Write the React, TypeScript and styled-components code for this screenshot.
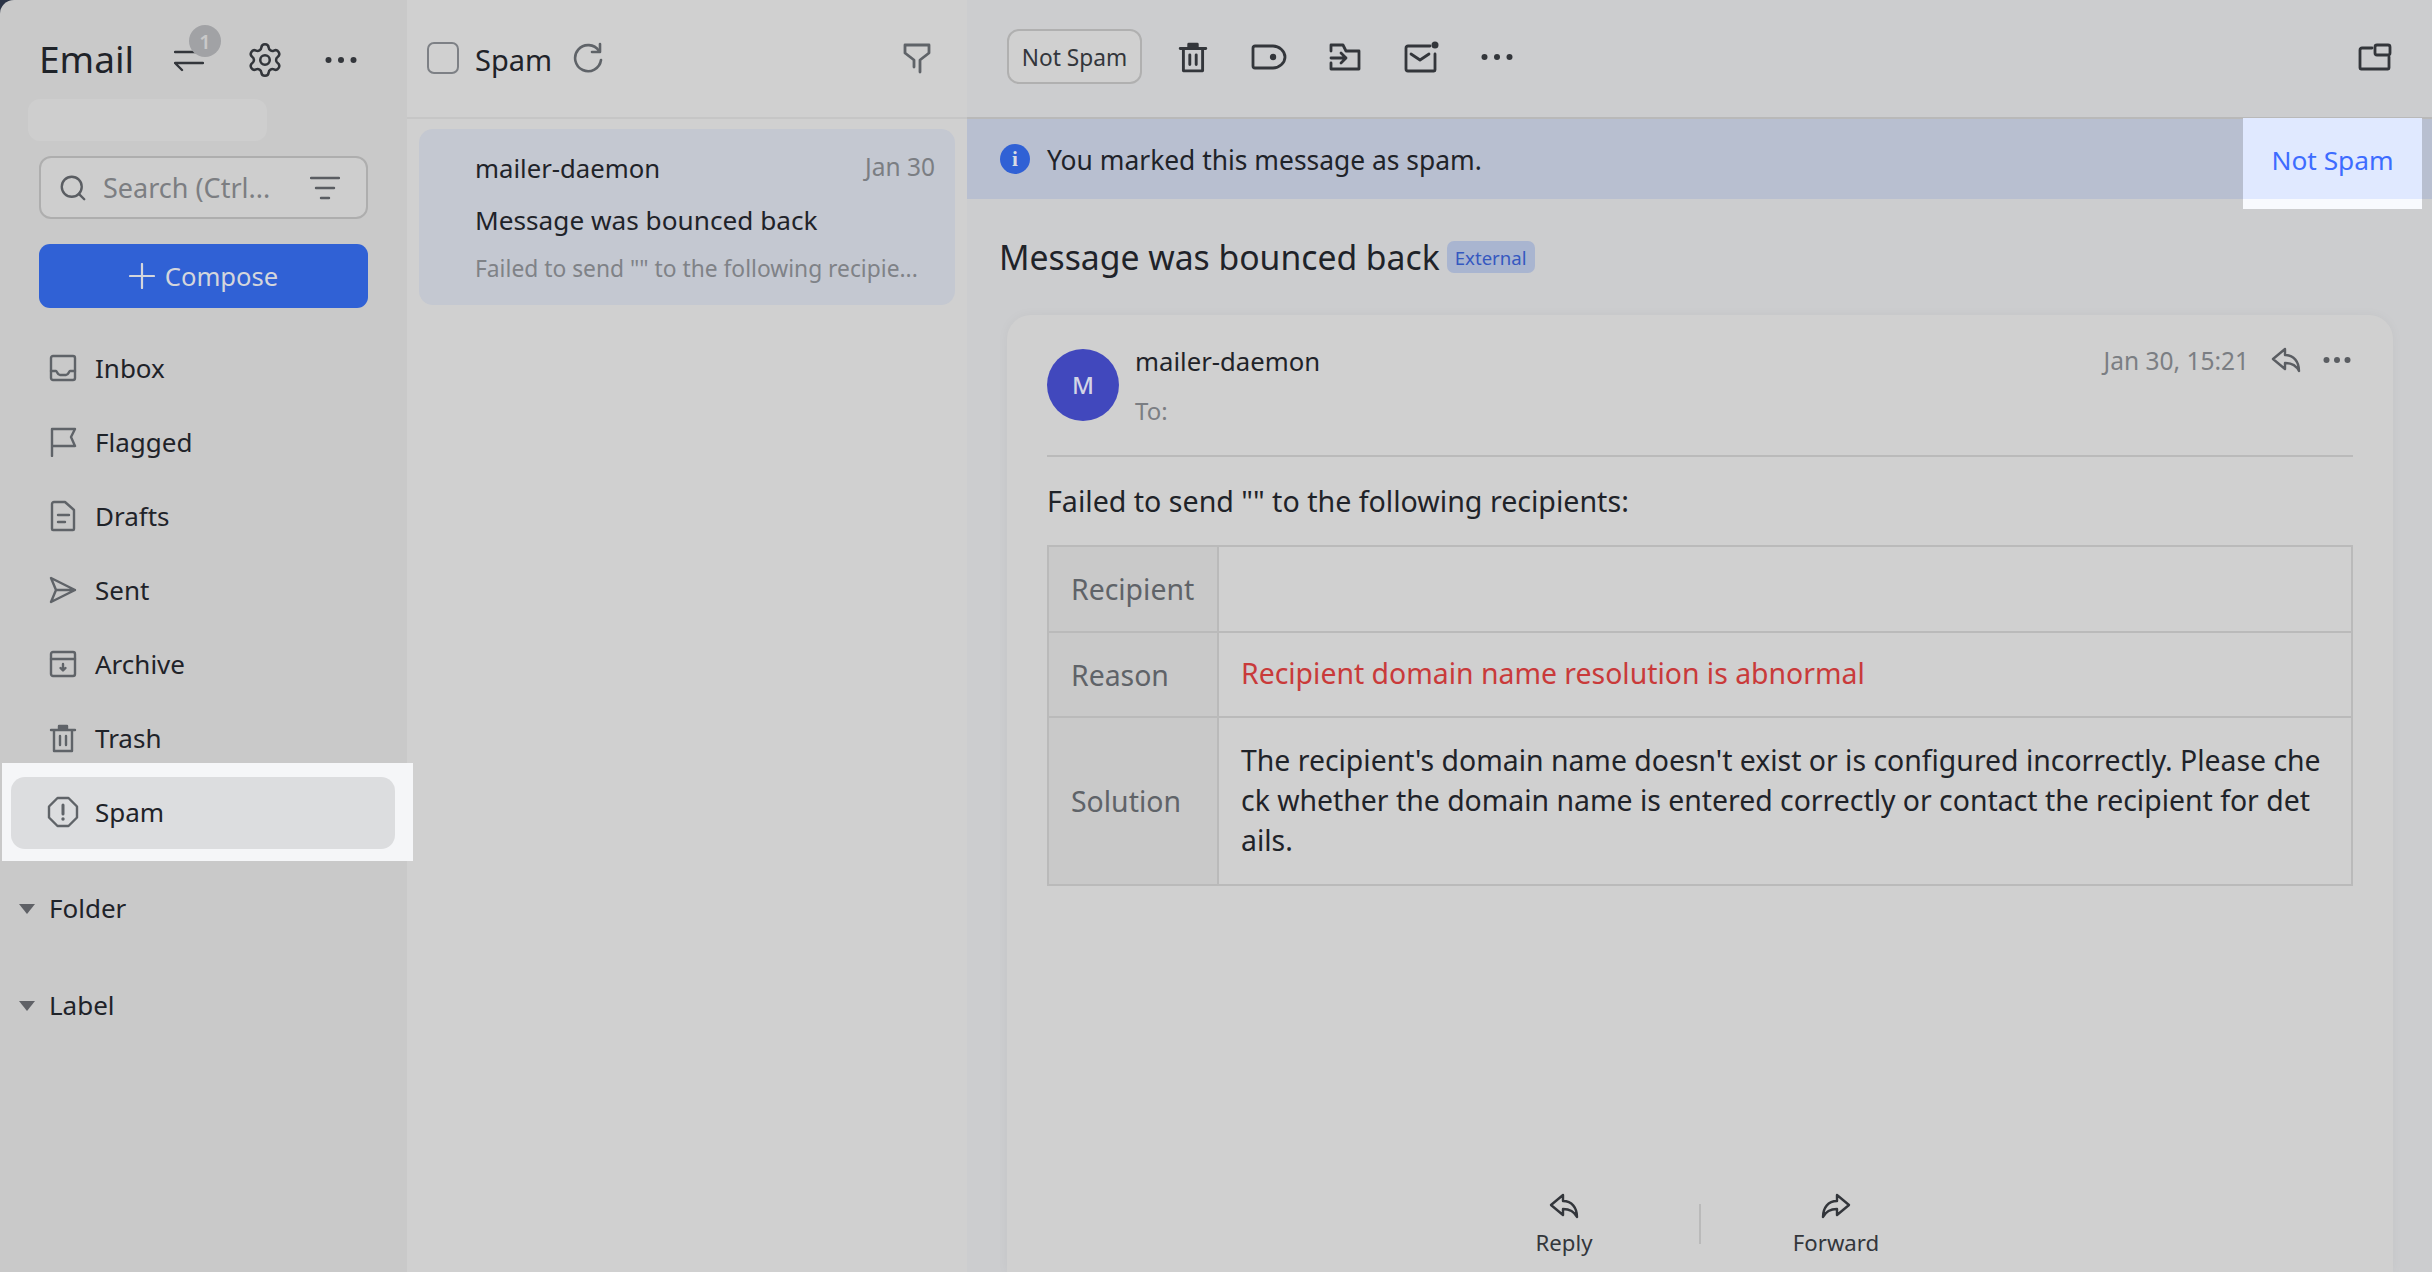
import React from "react";
import styled, { createGlobalStyle } from "styled-components";
import { Search, Settings } from "lucide-react";

const GlobalStyle = createGlobalStyle`
  html, body {
    margin: 0;
    padding: 0;
    height: 100%;
    overflow: hidden;
    background: #2b3446;
  }
  * {
    box-sizing: border-box;
  }
  body {
    font-family: "Noto Sans", "Open Sans", sans-serif;
    color: #1f2329;
  }
`;

const Shell = styled.div`
  display: flex;
  width: 2432px;
  height: 1272px;
  overflow: hidden;
`;

const Sidebar = styled.aside`
  width: 407px;
  flex: none;
  display: flex;
  flex-direction: column;
  padding-top: 30px;
  background: #c9c9c9;
  border-top-left-radius: 14px;
`;

const SideHead = styled.div`
  height: 60px;
  display: flex;
  align-items: center;
  padding-left: 39px;
`;

const AppName = styled.div`
  width: 135px;
  padding-bottom: 3px;
  font-size: 37px;
`;

const HeadIcon = styled.div<{ $w: number }>`
  position: relative;
  width: ${(p) => p.$w}px;
  display: flex;
  color: #33363b;
`;

const CountBadge = styled.span`
  position: absolute;
  top: -23px;
  left: 15px;
  width: 32px;
  height: 32px;
  border-radius: 50%;
  background: #a1a2a5;
  color: #c9c9c9;
  font-size: 20px;
  font-weight: 600;
  display: flex;
  align-items: center;
  justify-content: center;
`;

const AccountBar = styled.div`
  width: 239px;
  height: 42px;
  margin: 9px 0 0 28px;
  border-radius: 12px;
  background: #cecece;
`;

const SearchBox = styled.div`
  height: 63px;
  margin: 15px 39px 0;
  padding: 0 26px 0 17px;
  display: flex;
  align-items: center;
  border: 2px solid #aeaeae;
  border-radius: 12px;
  background: #cecece;
  color: #5a5d62;
`;

const SearchText = styled.span`
  flex: 1;
  margin-left: 15px;
  font-size: 27px;
  color: #7c7e82;
`;

const ComposeButton = styled.div`
  height: 64px;
  margin: 25px 39px 0;
  display: flex;
  align-items: center;
  justify-content: center;
  gap: 10px;
  border-radius: 11px;
  background: #3061d5;
  color: #d4d6dc;
  font-size: 25.6px;
`;

const Nav = styled.nav`
  width: 384px;
  margin: 25px 0 0 11px;
  display: flex;
  flex-direction: column;
  gap: 2px;
`;

const NavRow = styled.div`
  position: relative;
  height: 72px;
  display: flex;
  align-items: center;
  padding: 0 0 2px 36px;
  gap: 16px;
  font-size: 26px;
  color: #1f2329;
  border-radius: 14px;
`;

const NavIconSlot = styled.span`
  width: 32px;
  flex: none;
  display: flex;
  justify-content: center;
  color: #5f6368;
`;

const NavSpot = styled.span`
  position: absolute;
  top: -14px;
  left: -9px;
  right: -18px;
  bottom: -12px;
  background: #f5f6f8;
`;

const NavFill = styled.span`
  position: absolute;
  inset: 0;
  border-radius: 14px;
  background: #dcdddf;
`;

const NavContent = styled.span`
  position: relative;
  display: flex;
  align-items: center;
  gap: 16px;
`;

const GroupRow = styled.div<{ $top: number }>`
  height: 60px;
  margin-top: ${(p) => p.$top}px;
  padding: 0 0 2px 19px;
  display: flex;
  align-items: center;
  gap: 14px;
  font-size: 26px;
`;

const Caret = styled.span`
  width: 0;
  height: 0;
  margin-top: 2px;
  border-left: 8px solid transparent;
  border-right: 8px solid transparent;
  border-top: 10px solid #5f6166;
`;

const ListPane = styled.section`
  width: 560px;
  flex: none;
  background: #d0d0d0;
`;

const PaneHead = styled.div`
  height: 119px;
  display: flex;
  align-items: center;
  padding: 0 35px 2px 20px;
  border-bottom: 2px solid #c6c6c6;
  color: #5f6368;
`;

const CheckBox = styled.span`
  width: 32px;
  height: 32px;
  border: 2px solid #7d8085;
  border-radius: 7px;
`;

const PaneTitle = styled.span`
  margin: 3px 20px 0 16px;
  font-size: 29px;
  color: #1f2329;
`;

const Grow = styled.span`
  flex: 1;
`;

const MailCard = styled.div`
  margin: 10px 12px 0;
  height: 176px;
  padding: 19px 20px 0 56px;
  border-radius: 14px;
  background: #c4c8d1;
`;

const MailTop = styled.div`
  display: flex;
  align-items: center;
  justify-content: space-between;
  height: 40px;
  font-size: 25.7px;
`;

const MailDate = styled.span`
  margin-bottom: 4px;
  font-size: 24.5px;
  color: #7b7e83;
`;

const MailSubject = styled.div`
  height: 50px;
  margin-top: 7px;
  line-height: 50px;
  font-size: 26.2px;
`;

const MailPreview = styled.div`
  height: 40px;
  margin-top: 4px;
  line-height: 40px;
  font-size: 22.8px;
  color: #7f8287;
  white-space: nowrap;
`;

const Main = styled.main`
  flex: 1;
  min-width: 0;
  display: flex;
  flex-direction: column;
  background: #cccdcf;
`;

const Toolbar = styled.div`
  height: 119px;
  flex: none;
  display: flex;
  align-items: center;
  padding: 0 40px 4px 40px;
  border-bottom: 2px solid #b9b9b9;
  color: #33363b;
`;

const ToolGroup = styled.div`
  display: flex;
  align-items: center;
  gap: 42.5px;
  margin-left: 36px;
`;

const OutlineButton = styled.div`
  width: 135px;
  height: 55px;
  padding-top: 2px;
  display: flex;
  align-items: center;
  justify-content: center;
  border: 2px solid #b0b0b0;
  border-radius: 12px;
  background: #d0d0d0;
  font-size: 22.7px;
`;

const Banner = styled.div`
  position: relative;
  height: 80px;
  flex: none;
  display: flex;
  align-items: center;
  padding: 2px 0 0 33px;
  gap: 17px;
  background: #b8bfd0;
  font-size: 26.4px;
`;

const InfoDot = styled.span`
  width: 30px;
  height: 30px;
  margin-bottom: 2px;
  border-radius: 50%;
  background: #3061d5;
  color: #d8dbe4;
  font: bold 21px "Liberation Serif", serif;
  display: flex;
  align-items: center;
  justify-content: center;
`;

const BannerAction = styled.div`
  position: absolute;
  top: -1px;
  right: 10px;
  width: 179px;
  height: 91px;
  padding-top: 1px;
  background: linear-gradient(#e0e9ff 81px, #f8fafe 81px);
  color: #3d6cff;
  font-size: 26.3px;
  text-align: center;
  line-height: 82px;
`;

const SubjectRow = styled.div`
  height: 116px;
  flex: none;
  display: flex;
  align-items: center;
  padding: 0 0 0 32px;
  gap: 7px;
`;

const SubjectText = styled.h1`
  margin: 0;
  font-size: 33.7px;
  font-weight: 400;
`;

const ExternalTag = styled.span`
  height: 32px;
  width: 88px;
  border-radius: 7px;
  background: #a9b5d0;
  color: #3558c0;
  font-size: 18.6px;
  display: flex;
  align-items: center;
  justify-content: center;
`;

const ReadCard = styled.article`
  flex: 1;
  min-height: 0;
  margin: 0 39px 0 40px;
  padding: 34px 40px 0 40px;
  display: flex;
  flex-direction: column;
  border-radius: 24px 24px 0 0;
  background: #d0d0d0;
  box-shadow: 0 0 12px rgba(0, 0, 0, 0.04);
`;

const SenderRow = styled.div`
  height: 108px;
  flex: none;
  display: flex;
  gap: 16px;
  border-bottom: 2px solid #bababa;
`;

const Avatar = styled.div`
  width: 72px;
  height: 72px;
  padding-bottom: 2px;
  border-radius: 50%;
  background: #4148bd;
  color: #d3d5e6;
  font-size: 24px;
  font-weight: 500;
  display: flex;
  align-items: center;
  justify-content: center;
`;

const SenderInfo = styled.div`
  flex: 1;
`;

const SenderName = styled.div`
  height: 26px;
  line-height: 26px;
  font-size: 25.7px;
`;

const SenderTo = styled.div`
  margin-top: 23px;
  line-height: 26px;
  font-size: 24px;
  color: #7b7e83;
`;

const MetaRow = styled.div`
  height: 26px;
  margin: -2px 2px 0 0;
  display: flex;
  align-items: center;
  gap: 22px;
  color: #5a5d62;
`;

const MetaDate = styled.span`
  font-size: 24.5px;
  color: #7b7e83;
`;

const BodyLine = styled.p`
  height: 88px;
  flex: none;
  margin: 0;
  line-height: 88px;
  font-size: 28.6px;
`;

const ResultTable = styled.table`
  width: 100%;
  flex: none;
  border-collapse: collapse;
  border: 2px solid #bababa;
  font-size: 28.4px;

  th,
  td {
    border: 2px solid #bababa;
    padding: 0 22px;
    font-weight: 400;
    text-align: left;
  }

  th {
    width: 170px;
    background: #c9c9c9;
    color: #5f6368;
  }
`;

const TableRow = styled.tr<{ $h: number }>`
  height: ${(p) => p.$h}px;
`;

const ErrorText = styled.td`
  color: #c93a3a;

  span {
    position: relative;
    top: -2px;
  }
`;

const SolutionText = styled.td`
  line-height: 40px;
  white-space: nowrap;

  span {
    position: relative;
    top: -1px;
  }
`;

const ReplyBar = styled.div`
  margin-top: auto;
  padding-bottom: 14px;
  display: flex;
  align-items: center;
  justify-content: center;
`;

const ReplyButton = styled.div`
  width: 270px;
  padding-top: 3px;
  display: flex;
  flex-direction: column;
  align-items: center;
  gap: 8px;
  font-size: 22.2px;
  color: #33363b;
`;

const ReplyDivider = styled.span`
  width: 2px;
  height: 40px;
  background: #bababa;
`;

type IconProps = {
  w?: number;
  h?: number;
  vw?: number;
  vh?: number;
  sw?: number;
  children: React.ReactNode;
};

const Icon = ({ w = 28, h = 28, vw, vh, sw = 2.4, children }: IconProps) => (
  <svg
    width={w}
    height={h}
    viewBox={`0 0 ${vw ?? w} ${vh ?? h}`}
    fill="none"
    stroke="currentColor"
    strokeWidth={sw}
    strokeLinecap="round"
    strokeLinejoin="round"
  >
    {children}
  </svg>
);

const Dots = ({ w = 32 }: { w?: number }) => (
  <svg width={w} height="8" viewBox={`0 0 ${w} 8`} fill="currentColor">
    <circle cx="3.500" cy="4" r="3" />
    <circle cx={w / 2} cy="4" r="3" />
    <circle cx={w - 3.5} cy="4" r="3" />
  </svg>
);

const InboxIcon = () => (
  <Icon>
    <rect x="2" y="2" width="24" height="24" rx="2" />
    <path d="M2 17h5c1 0 1.500 4 4 4h6c2.500 0 3-4 4-4h5" />
  </Icon>
);
const FlagIcon = () => (
  <Icon h={30}>
    <path d="M3 29V2h23l-4 8 4 9H3" />
  </Icon>
);
const DraftIcon = () => (
  <Icon h={32}>
    <path d="M3 4a2 2 0 012-2h11l9 8v19a1 1 0 01-1 1H4a1 1 0 01-1-1z" />
    <path d="M9 15h11M9 22h7" />
  </Icon>
);
const SentIcon = () => (
  <Icon>
    <path d="M2 2l24 12L2 26l5-12zM7 14h19" />
  </Icon>
);
const ArchiveIcon = () => (
  <Icon>
    <rect x="2" y="2" width="24" height="24" rx="2" />
    <path d="M2 9h24M14 14v6M11.500 18l2.500 2.500 2.500-2.500" />
  </Icon>
);
const TrashIcon = ({ w = 28, h = 30, sw = 2.4 }: { w?: number; h?: number; sw?: number }) => (
  <Icon w={w} h={h} vw={28} vh={30} sw={sw}>
    <path d="M2 7h24M5 7v21h18V7M11 13v9M17 13v9" />
    <path d="M10 6V3h8v3z" fill="currentColor" />
  </Icon>
);
const SpamIcon = () => (
  <Icon w={32} h={32}>
    <path d="M10.500 2h11L30 10.500v11L21.500 30h-11L2 21.500v-11z" />
    <path d="M16 9v9" strokeWidth="3" />
    <path d="M16 23v.1" strokeWidth="3.400" />
  </Icon>
);
const SortIcon = () => (
  <Icon w={30} h={24}>
    <path d="M1 4h28M1 15h28M1 15l7 7" />
  </Icon>
);
const ListFilterIcon = () => (
  <Icon w={30} h={26}>
    <path d="M1 3h28M6 13h18M11 23h8" />
  </Icon>
);
const RefreshIcon = () => (
  <Icon w={32} h={32} sw={2.600}>
    <path d="M27 9a13 13 0 10 2 9" />
    <path d="M28 2v8h-8" />
  </Icon>
);
const FunnelIcon = () => (
  <Icon w={30} h={32} sw={2.800}>
    <path d="M3 11V3h24v8l-9 7v12M3 11l9 7v7" />
  </Icon>
);
const TagIcon = () => (
  <Icon w={36} h={28} sw={2.800}>
    <path d="M2 5a2 2 0 012-2h18c6 0 12 5 12 11s-6 11-12 11H4a2 2 0 01-2-2z" />
    <circle cx="22" cy="14" r="1.800" fill="currentColor" />
  </Icon>
);
const MoveIcon = () => (
  <Icon w={32} h={30} sw={2.800}>
    <path d="M2 9V3h12l3 6h13v18H2v-6" />
    <path d="M2 16h15M12 11l5 5-5 5" />
  </Icon>
);
const MailDotIcon = () => (
  <Icon w={35} h={32} sw={2.800}>
    <path d="M26 5H4a2 2 0 00-2 2v21a2 2 0 002 2h26a1 1 0 001-1V13" />
    <path d="M7 13l9 6 9-6" />
    <circle cx="31" cy="4" r="3.500" fill="currentColor" stroke="none" />
  </Icon>
);
const WindowIcon = () => (
  <Icon w={34} h={28} sw={2.800}>
    <path d="M14 5H4a2 2 0 00-2 2v18a1 1 0 001 1h27a1 1 0 001-1V14" />
    <rect x="17" y="2" width="15" height="10" rx="2" />
  </Icon>
);
const ReplyArrow = ({ flip }: { flip?: boolean }) => (
  <Icon w={30} h={26} sw={2.400}>
    <path
      d="M14 2L2 12l12 10v-6c7 0 11 2 14 8 0-9-5-16-14-16z"
      transform={flip ? "matrix(-1 0 0 1 30 0)" : undefined}
    />
  </Icon>
);

const navItems = [
  { label: "Inbox", icon: <InboxIcon /> },
  { label: "Flagged", icon: <FlagIcon /> },
  { label: "Drafts", icon: <DraftIcon /> },
  { label: "Sent", icon: <SentIcon /> },
  { label: "Archive", icon: <ArchiveIcon /> },
  { label: "Trash", icon: <TrashIcon /> },
];

export default function App() {
  return (
    <Shell>
      <GlobalStyle />
      <Sidebar>
        <SideHead>
          <AppName>Email</AppName>
          <HeadIcon $w={72}>
            <SortIcon />
            <CountBadge>1</CountBadge>
          </HeadIcon>
          <HeadIcon $w={79}>
            <Settings size={38} strokeWidth={1.600} />
          </HeadIcon>
          <HeadIcon $w={32}>
            <Dots />
          </HeadIcon>
        </SideHead>
        <AccountBar />
        <SearchBox>
          <Search size={30} strokeWidth={1.900} />
          <SearchText>Search (Ctrl...</SearchText>
          <ListFilterIcon />
        </SearchBox>
        <ComposeButton>
          <Icon w={26} h={26} sw={2.200}>
            <path d="M13 1v24M1 13h24" />
          </Icon>
          Compose
        </ComposeButton>
        <Nav>
          {navItems.map((item) => (
            <NavRow key={item.label}>
              <NavIconSlot>{item.icon}</NavIconSlot>
              {item.label}
            </NavRow>
          ))}
          <NavRow>
            <NavSpot />
            <NavFill />
            <NavContent>
              <NavIconSlot>
                <SpamIcon />
              </NavIconSlot>
              Spam
            </NavContent>
          </NavRow>
        </Nav>
        <GroupRow $top={30}>
          <Caret />
          Folder
        </GroupRow>
        <GroupRow $top={37}>
          <Caret />
          Label
        </GroupRow>
      </Sidebar>

      <ListPane>
        <PaneHead>
          <CheckBox />
          <PaneTitle>Spam</PaneTitle>
          <RefreshIcon />
          <Grow />
          <FunnelIcon />
        </PaneHead>
        <MailCard>
          <MailTop>
            mailer-daemon
            <MailDate>Jan 30</MailDate>
          </MailTop>
          <MailSubject>Message was bounced back</MailSubject>
          <MailPreview>Failed to send "" to the following recipie...</MailPreview>
        </MailCard>
      </ListPane>

      <Main>
        <Toolbar>
          <OutlineButton>Not Spam</OutlineButton>
          <ToolGroup>
            <TrashIcon w={30} h={32} sw={2.700} />
            <TagIcon />
            <MoveIcon />
            <MailDotIcon />
            <Dots />
          </ToolGroup>
          <Grow />
          <WindowIcon />
        </Toolbar>
        <Banner>
          <InfoDot>i</InfoDot>
          You marked this message as spam.
          <BannerAction>Not Spam</BannerAction>
        </Banner>
        <SubjectRow>
          <SubjectText>Message was bounced back</SubjectText>
          <ExternalTag>External</ExternalTag>
        </SubjectRow>
        <ReadCard>
          <SenderRow>
            <Avatar>M</Avatar>
            <SenderInfo>
              <SenderName>mailer-daemon</SenderName>
              <SenderTo>To:</SenderTo>
            </SenderInfo>
            <MetaRow>
              <MetaDate>Jan 30, 15:21</MetaDate>
              <ReplyArrow />
              <Dots w={28} />
            </MetaRow>
          </SenderRow>
          <BodyLine>Failed to send "" to the following recipients:</BodyLine>
          <ResultTable>
            <tbody>
              <TableRow $h={86}>
                <th>Recipient</th>
                <td />
              </TableRow>
              <TableRow $h={85}>
                <th>Reason</th>
                <ErrorText>
                  <span>Recipient domain name resolution is abnormal</span>
                </ErrorText>
              </TableRow>
              <TableRow $h={168}>
                <th>Solution</th>
                <SolutionText>
                  <span>
                    The recipient's domain name doesn't exist or is configured incorrectly. Please che
                    <br />
                    ck whether the domain name is entered correctly or contact the recipient for det
                    <br />
                    ails.
                  </span>
                </SolutionText>
              </TableRow>
            </tbody>
          </ResultTable>
          <ReplyBar>
            <ReplyButton>
              <ReplyArrow />
              Reply
            </ReplyButton>
            <ReplyDivider />
            <ReplyButton>
              <ReplyArrow flip />
              Forward
            </ReplyButton>
          </ReplyBar>
        </ReadCard>
      </Main>
    </Shell>
  );
}
